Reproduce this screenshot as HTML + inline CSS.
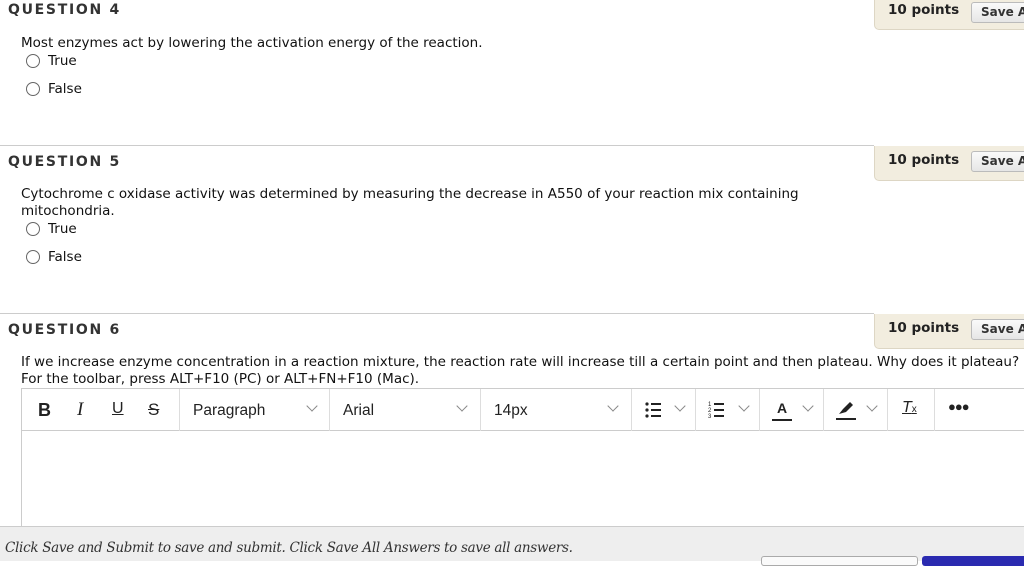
<!DOCTYPE html>
<html><head><meta charset="utf-8"><style>
*{margin:0;padding:0;box-sizing:border-box}
body{width:1024px;height:561px;overflow:hidden;background:#fff;font-family:"DejaVu Sans","Liberation Sans",sans-serif;color:#111;position:relative}
.a{position:absolute;white-space:nowrap}
.qh{font-weight:bold;font-size:14px;letter-spacing:1.7px;color:#333;left:8px}
.t{font-size:13.5px;left:21px;color:#111}
.r{width:14px;height:14px;border:1px solid #666;border-radius:50%;left:26px}
.opt{font-size:13.5px;left:48px}
.pts{left:874px;width:160px;height:30px;background:#f2eddf;border:1px solid #ddd6c4;border-top:none;border-radius:0 0 0 5px}
.pts span{position:absolute;left:13px;top:2px;font-weight:bold;font-size:13.5px;color:#222}
.pts b{position:absolute;left:96px;top:2px;height:21px;width:70px;border:1px solid #bbb;border-radius:3px;background:linear-gradient(#fafafa,#e6e6e6);font-size:12px;color:#333;padding:2px 0 0 9px;font-weight:bold}
.sep{left:0;width:874px;height:1px;background:#ccc}
.tb{font-family:"Liberation Sans",sans-serif;font-size:15.5px;color:#222}
.vl{position:absolute;top:0;width:1px;height:42px;background:#ddd}
.ch{position:absolute;top:13px;width:8px;height:8px;border-right:1.3px solid #888;border-bottom:1.3px solid #888;transform:rotate(45deg)}
</style></head><body>

<div class="a qh" style="top:2px">QUESTION 4</div>
<div class="a pts" style="top:0"><span>10 points</span><b>Save A</b></div>
<div class="a t" style="top:35px">Most enzymes act by lowering the activation energy of the reaction.</div>
<div class="a r" style="top:54px"></div><div class="a opt" style="top:53px">True</div>
<div class="a r" style="top:82px"></div><div class="a opt" style="top:81px">False</div>

<div class="a sep" style="top:145px"></div>
<div class="a qh" style="top:154px">QUESTION 5</div>
<div class="a pts" style="top:146px;height:35px"><span style="top:6px">10 points</span><b style="top:5px">Save A</b></div>
<div class="a t" style="top:186px">Cytochrome c oxidase activity was determined by measuring the decrease in A550 of your reaction mix containing</div>
<div class="a t" style="top:203px">mitochondria.</div>
<div class="a r" style="top:222px"></div><div class="a opt" style="top:221px">True</div>
<div class="a r" style="top:250px"></div><div class="a opt" style="top:249px">False</div>

<div class="a sep" style="top:313px"></div>
<div class="a qh" style="top:322px">QUESTION 6</div>
<div class="a pts" style="top:314px;height:35px"><span style="top:6px">10 points</span><b style="top:5px">Save A</b></div>
<div class="a t" style="top:354px">If we increase enzyme concentration in a reaction mixture, the reaction rate will increase till a certain point and then plateau. Why does it plateau?</div>
<div class="a t" style="top:371px">For the toolbar, press ALT+F10 (PC) or ALT+FN+F10 (Mac).</div>

<div class="a" style="left:21px;top:388px;width:1010px;height:140px;border:1px solid #ccc;border-right:none">
 <div style="position:absolute;left:0;top:0;width:1010px;height:42px;border-bottom:1px solid #ccc">
  <div class="a tb" style="left:16px;top:11px;font-weight:bold;font-size:18px">B</div>
  <div class="a tb" style="left:55px;top:10px;font-style:italic;font-family:'Liberation Serif',serif;font-size:19px">I</div>
  <div class="a tb" style="left:90px;top:11px;font-size:16px;text-decoration:underline">U</div>
  <div class="a tb" style="left:126px;top:11px;font-size:17px;text-decoration:line-through">S</div>
  <div class="vl" style="left:157px"></div>
  <div class="a tb" style="left:171px;top:13px">Paragraph</div><div class="ch" style="left:286px"></div>
  <div class="vl" style="left:307px"></div>
  <div class="a tb" style="left:321px;top:13px">Arial</div><div class="ch" style="left:436px"></div>
  <div class="vl" style="left:458px"></div>
  <div class="a tb" style="left:472px;top:13px">14px</div><div class="ch" style="left:587px"></div>
  <div class="vl" style="left:609px"></div>
  <svg class="a" style="left:622px;top:12px" width="20" height="18"><g fill="#222"><circle cx="3" cy="3" r="1.6"/><circle cx="3" cy="9" r="1.6"/><circle cx="3" cy="15" r="1.6"/><rect x="7" y="2" width="10" height="2"/><rect x="7" y="8" width="10" height="2"/><rect x="7" y="14" width="10" height="2"/></g></svg>
  <div class="ch" style="left:654px"></div>
  <div class="vl" style="left:673px"></div>
  <svg class="a" style="left:686px;top:12px" width="20" height="18"><g fill="#222"><text x="0" y="5" font-size="6" font-family="Liberation Sans">1</text><text x="0" y="11" font-size="6" font-family="Liberation Sans">2</text><text x="0" y="17" font-size="6" font-family="Liberation Sans">3</text><rect x="6" y="2" width="10" height="2"/><rect x="6" y="8" width="10" height="2"/><rect x="6" y="14" width="10" height="2"/></g></svg>
  <div class="ch" style="left:718px"></div>
  <div class="vl" style="left:737px"></div>
  <div class="a tb" style="left:755px;top:11px;font-size:14px;font-weight:bold">A</div>
  <div class="a" style="left:750px;top:30px;width:20px;height:2px;background:#222"></div>
  <div class="ch" style="left:782px"></div>
  <div class="vl" style="left:801px"></div>
  <svg class="a" style="left:813px;top:10px" width="22" height="22"><path d="M4 15 L8 10 L15 3 L18 6 L11 13 Z" fill="#222"/><rect x="1" y="19" width="20" height="2" fill="#222"/></svg>
  <div class="ch" style="left:846px"></div>
  <div class="vl" style="left:865px"></div>
  <div class="a tb" style="left:880px;top:10px;font-style:italic;font-size:16px;text-decoration:underline">T<span style="font-size:10px;font-style:normal;text-decoration:none">x</span></div>
  <div class="vl" style="left:912px"></div>
  <div class="a tb" style="left:926px;top:10px;font-size:13px;font-weight:bold;letter-spacing:-1px">●●●</div>
 </div>
</div>

<div class="a" style="left:0;top:526px;width:1024px;height:35px;background:#eee;border-top:1px solid #ccc"></div>
<div class="a" style="left:5px;top:540px;font-family:'DejaVu Serif','Liberation Serif',serif;font-style:italic;font-size:13.5px;letter-spacing:-0.3px;color:#333">Click Save and Submit to save and submit. Click Save All Answers to save all answers.</div>
<div class="a" style="left:761px;top:556px;width:157px;height:10px;border:1px solid #aaa;border-radius:3px;background:#fafafa"></div>
<div class="a" style="left:922px;top:556px;width:110px;height:10px;background:#2a2ab0;border-radius:3px"></div>
</body></html>
